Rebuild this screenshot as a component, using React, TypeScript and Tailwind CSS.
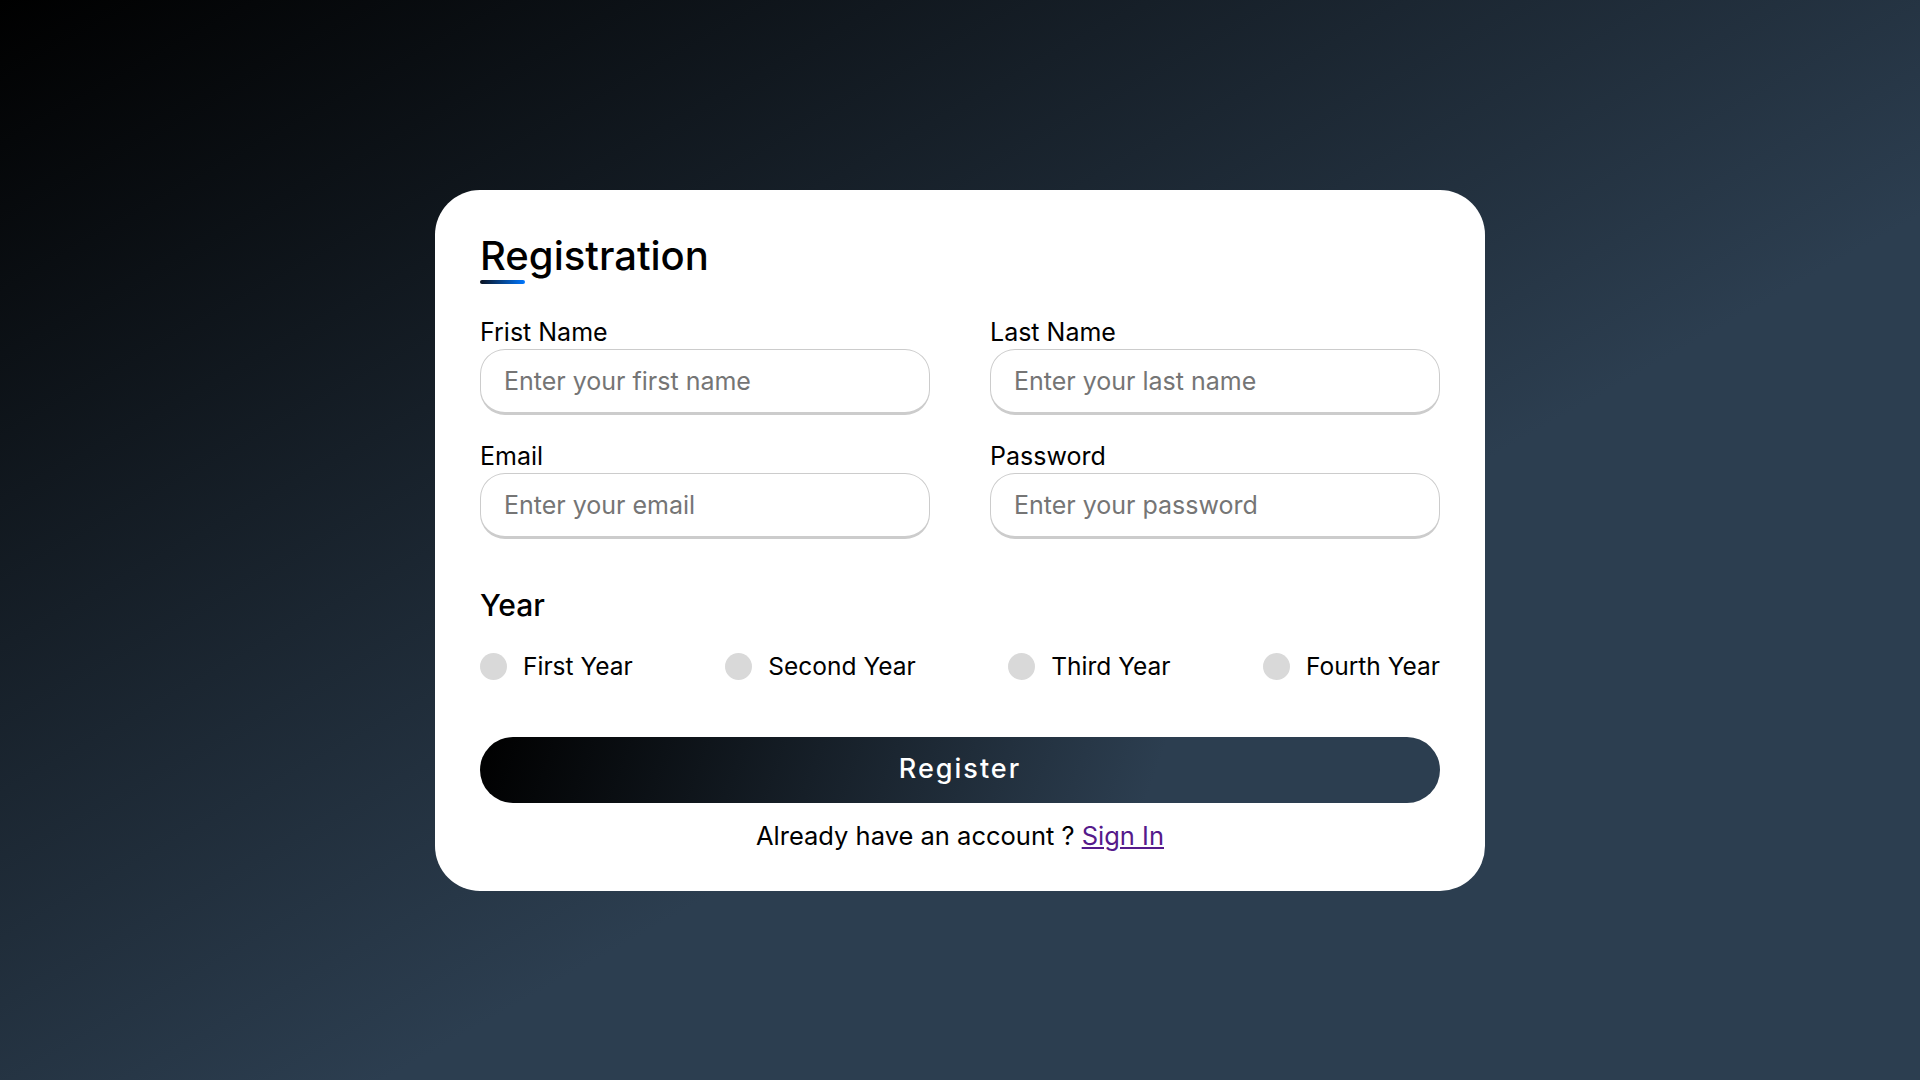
const font = { fontFamily: 'Inter, "Noto Sans", sans-serif' };

const years = ['First Year', 'Second Year', 'Third Year', 'Fourth Year'];

function Field({ label, placeholder, type = 'text' }: { label: string; placeholder: string; type?: string }) {
  return (
    <div className="flex flex-col">
      <label className="text-[25px] leading-[29px] text-black">{label}</label>
      <input
        type={type}
        placeholder={placeholder}
        className="mt-[2px] h-[66px] w-full rounded-[25px] border border-b-[3px] border-[#cccccc] bg-white pl-[23px] text-[25px] text-black outline-none placeholder:text-[#757575]"
      />
    </div>
  );
}

export default function App() {
  return (
    <div
      style={font}
      className="flex h-[1080px] w-full items-center justify-center bg-[linear-gradient(to_bottom_right,#000000_0%,#2c3e50_60%)]"
    >
      <div className="w-[1050px] rounded-[45px] bg-white px-[45px] pt-[43px] pb-[40px]">
        <h1 className="text-[40px] leading-[45px] font-medium text-black">Registration</h1>
        <div className="mt-[2px] h-[4px] w-[45px] rounded-full bg-[linear-gradient(to_right,#0b1220,#0077ff)]" />

        <div className="mt-[34px] grid grid-cols-2 gap-x-[60px] gap-y-[27px]">
          <Field label="Frist Name" placeholder="Enter your first name" />
          <Field label="Last Name" placeholder="Enter your last name" />
          <Field label="Email" placeholder="Enter your email" type="email" />
          <Field label="Password" placeholder="Enter your password" type="password" />
        </div>

        <h2 className="mt-[48px] text-[30px] leading-[36px] font-medium text-black">Year</h2>
        <div className="mt-[30px] flex items-center justify-between">
          {years.map((y) => (
            <label key={y} className="flex items-center gap-[16px]">
              <span className="h-[27px] w-[27px] rounded-full bg-[#d9d9d9]" />
              <span className="text-[24.5px] leading-[27px] text-black">{y}</span>
            </label>
          ))}
        </div>

        <button className="mt-[57px] flex h-[66px] w-full items-center justify-center rounded-full bg-[linear-gradient(110deg,#000000_0%,#2c3e50_70%)] text-[27px] font-medium tracking-[2px] text-white">
          Register
        </button>

        <p className="mt-[18px] text-center text-[25.5px] leading-[30px] text-black">
          Already have an account ?{' '}
          <a href="#" className="text-[#551a8b] underline">
            Sign In
          </a>
        </p>
      </div>
    </div>
  );
}
